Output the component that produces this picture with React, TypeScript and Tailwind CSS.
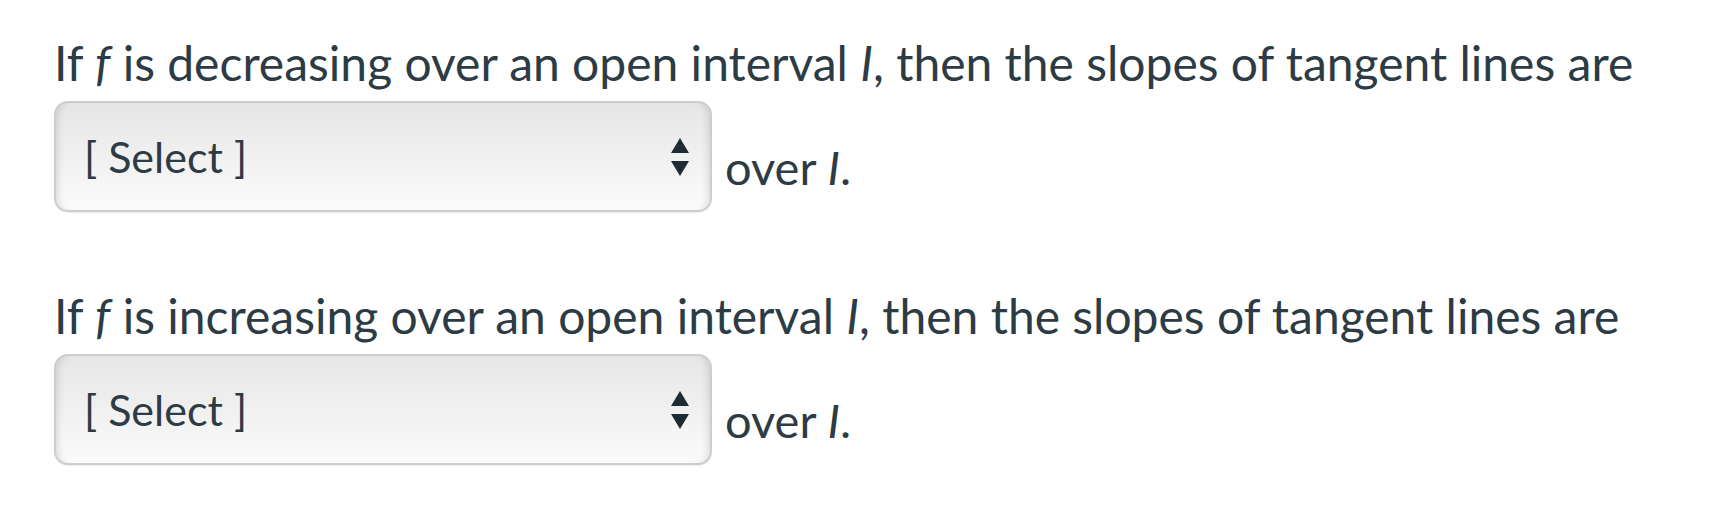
const QUESTIONS = [
  "decreasing",
  "increasing",
];

function Arrows() {
  return (
    <svg width="20" height="38" viewBox="0 0 20 38" className="shrink-0">
      <path d="M10 0 L19 15 L1 15 Z" fill="#1e2b33" />
      <path d="M10 38 L19 23 L1 23 Z" fill="#1e2b33" />
    </svg>
  );
}

function FakeSelect() {
  return (
    <div className="flex h-[111px] w-[658px] items-center justify-between rounded-[14px] border-2 border-[#cdcdcd] bg-gradient-to-b from-[#e6e6e6] to-[#fbfbfb] pl-[28px] pr-[20px] shadow-[inset_7px_0_7px_-5px_rgba(0,0,0,0.12),inset_-7px_0_7px_-5px_rgba(0,0,0,0.12),0_1px_1px_rgba(0,0,0,0.08)]">
      <span className="text-[43px] leading-none text-[#2d3b45]">[ Select ]</span>
      <Arrows />
    </div>
  );
}

export default function App() {
  return (
    <div className="h-[528px] w-[1720px] bg-white pl-[54px] pt-[39px] font-['Lato','Liberation_Sans',sans-serif] text-[#2d3b45]">
      {QUESTIONS.map((q, i) => (
        <div key={q} className={i > 0 ? "mt-[80px]" : ""}>
          <p className="text-[48px] leading-[48px]">
            If <i>f</i> is {q} over an open interval <i>I</i>, then the slopes of tangent lines are
          </p>
          <div className="mt-[14px] flex items-start">
            <FakeSelect />
            <span className="ml-[13px] mt-[42px] text-[47px] leading-[48px]">
              over <i>I</i>.
            </span>
          </div>
        </div>
      ))}
    </div>
  );
}
